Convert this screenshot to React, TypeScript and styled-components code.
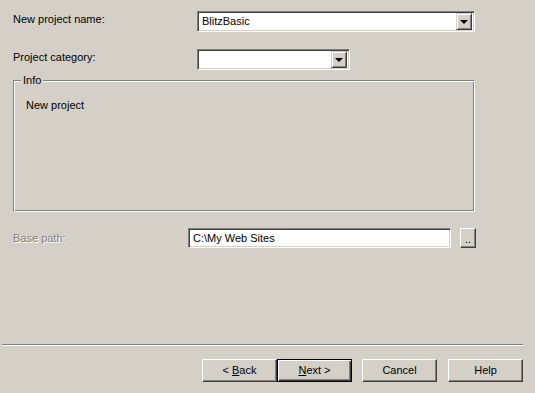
import React from "react";
import styled, { createGlobalStyle, css } from "styled-components";

const Global = createGlobalStyle`
  html, body { margin: 0; padding: 0; background: #d4d0c8; }
  body { font-family: "Liberation Sans", Arial, sans-serif; font-size: 11px; color: #000; }
`;

const Page = styled.div`
  width: 535px;
  height: 393px;
  background: #d4d0c8;
  display: flex;
  flex-direction: column;
  box-sizing: border-box;
  overflow: hidden;
`;

const Content = styled.div`
  display: flex;
  flex-direction: column;
  padding: 11px 59px 0 13px;
`;

const Row = styled.div<{ $mt?: number; $top?: boolean }>`
  display: flex;
  align-items: ${(p) => (p.$top ? "flex-start" : "center")};
  margin-top: ${(p) => p.$mt ?? 0}px;
`;

const Label = styled.div<{ $w: number; $disabled?: boolean; $pt?: number }>`
  width: ${(p) => p.$w}px;
  flex: none;
  line-height: 13px;
  padding-top: ${(p) => p.$pt ?? 0}px;
  ${(p) =>
    p.$disabled &&
    css`
      color: #808080;
      text-shadow: 1px 1px 0 #ffffff;
    `}
`;

const sunken = css`
  box-sizing: border-box;
  border-top: 1px solid #808080;
  border-left: 1px solid #808080;
  border-right: 1px solid #ffffff;
  border-bottom: 1px solid #ffffff;
  box-shadow: inset 1px 1px 0 #404040, inset -1px -1px 0 #d4d0c8;
  background: #fff;
`;

const Combo = styled.div<{ $w: number }>`
  ${sunken};
  width: ${(p) => p.$w}px;
  height: 21px;
  display: flex;
  align-items: center;
  padding: 2px;
`;

const ComboText = styled.div`
  flex: 1;
  padding-left: 2px;
  line-height: 13px;
  white-space: nowrap;
`;

const DropBtn = styled.div`
  box-sizing: border-box;
  width: 16px;
  height: 17px;
  flex: none;
  background: #d4d0c8;
  border-top: 1px solid #d4d0c8;
  border-left: 1px solid #d4d0c8;
  border-right: 1px solid #404040;
  border-bottom: 1px solid #404040;
  box-shadow: inset 1px 1px 0 #ffffff, inset -1px -1px 0 #808080;
  display: flex;
  align-items: center;
  justify-content: center;
`;

const Arrow = styled.div`
  width: 0;
  height: 0;
  border-left: 4px solid transparent;
  border-right: 4px solid transparent;
  border-top: 4px solid #000;
  margin-top: 1px;
`;

const Group = styled.div`
  position: relative;
  margin-top: 10px;
  width: 462px;
  height: 132px;
  box-sizing: border-box;
  border-top: 1px solid #808080;
  border-left: 1px solid #808080;
  border-right: 1px solid #ffffff;
  border-bottom: 1px solid #ffffff;
  box-shadow: inset 1px 1px 0 #ffffff, inset -1px -1px 0 #808080;
  padding: 18px 12px;
`;

const Legend = styled.div`
  position: absolute;
  top: -7px;
  left: 7px;
  padding: 0 2px;
  background: #d4d0c8;
  line-height: 13px;
`;

const GroupText = styled.div`
  line-height: 13px;
`;

const Edit = styled.div`
  ${sunken};
  width: 263px;
  height: 20px;
  padding: 3px 4px;
  line-height: 13px;
  white-space: nowrap;
`;

const raised = css`
  box-sizing: border-box;
  background: #d4d0c8;
  border-top: 1px solid #ffffff;
  border-left: 1px solid #ffffff;
  border-right: 1px solid #404040;
  border-bottom: 1px solid #404040;
  box-shadow: inset -1px -1px 0 #808080;
`;

const SmallBtn = styled.div`
  ${raised};
  width: 16px;
  height: 20px;
  margin-left: 9px;
  display: flex;
  align-items: flex-end;
  justify-content: center;
  padding-bottom: 4px;
  line-height: 8px;
  font-size: 11px;
`;

const Spacer = styled.div`
  flex: 1;
`;

const Separator = styled.div`
  margin: 0 12px 0 2px;
  height: 2px;
  border-top: 1px solid #808080;
  border-bottom: 1px solid #ffffff;
  box-sizing: border-box;
`;

const ButtonBar = styled.div`
  display: flex;
  justify-content: flex-end;
  padding: 13px 12px 11px 0;
`;

const Button = styled.div<{ $default?: boolean; $ml?: number }>`
  width: 75px;
  height: 23px;
  margin-left: ${(p) => p.$ml ?? 0}px;
  display: flex;
  align-items: center;
  justify-content: center;
  line-height: 13px;
  box-sizing: border-box;
  ${(p) =>
    p.$default
      ? css`
          background: #d4d0c8;
          border: 1px solid #000;
          box-shadow: inset 1px 1px 0 #ffffff, inset -1px -1px 0 #404040,
            inset -2px -2px 0 #808080;
        `
      : raised}
`;

const U = styled.span`
  text-decoration: underline;
`;

export default function App() {
  return (
    <>
      <Global />
      <Page>
        <Content>
          <Row $top>
            <Label $w={184} $pt={2}>
              New project name:
            </Label>
            <Combo $w={278}>
              <ComboText>BlitzBasic</ComboText>
              <DropBtn>
                <Arrow />
              </DropBtn>
            </Combo>
          </Row>
          <Row $mt={17} $top>
            <Label $w={184} $pt={2}>
              Project category:
            </Label>
            <Combo $w={153}>
              <ComboText />
              <DropBtn>
                <Arrow />
              </DropBtn>
            </Combo>
          </Row>
          <Group>
            <Legend>Info</Legend>
            <GroupText>New project</GroupText>
          </Group>
          <Row $mt={16}>
            <Label $w={175} $disabled>
              Base path:
            </Label>
            <Edit>C:\My Web Sites</Edit>
            <SmallBtn>..</SmallBtn>
          </Row>
        </Content>
        <Spacer />
        <Separator />
        <ButtonBar>
          <Button>
            &lt;&nbsp;<U>B</U>ack
          </Button>
          <Button $default>
            <U>N</U>ext&nbsp;&gt;
          </Button>
          <Button $ml={10}>Cancel</Button>
          <Button $ml={11}>Help</Button>
        </ButtonBar>
      </Page>
    </>
  );
}
